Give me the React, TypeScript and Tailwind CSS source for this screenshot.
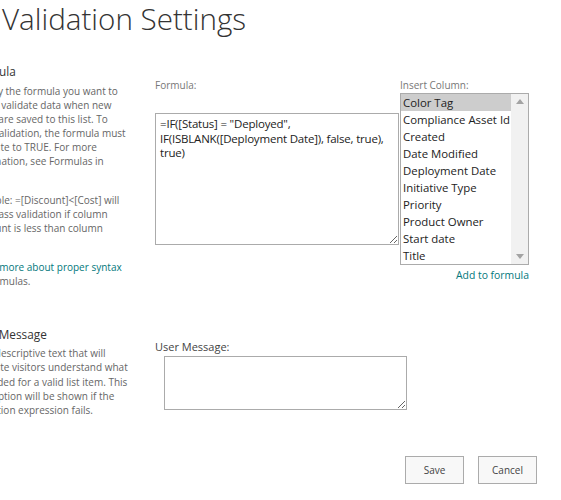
import React from "react";

// ─── Data ─────────────────────────────────────────────────────────────────────

const columns = [
  "Color Tag",
  "Compliance Asset Id",
  "Created",
  "Date Modified",
  "Deployment Date",
  "Initiative Type",
  "Priority",
  "Product Owner",
  "Start date",
  "Title",
];

const formula =
  '=IF([Status] = "Deployed", IF(ISBLANK([Deployment Date]), false, true), true)';

// ─── Sub-components ───────────────────────────────────────────────────────────

function Lines({ lines }: { lines: string[] }) {
  return (
    <p className="mb-[11px] whitespace-nowrap text-[10px] leading-[14px] text-[#666]">
      {lines.map((l, i) => (
        <span key={i} className="block h-[14px]">
          {l}
        </span>
      ))}
    </p>
  );
}

function ColumnList() {
  return (
    <div className="flex h-[172px] w-[129px] border border-[#ababab] bg-white">
      <ul className="flex-1 overflow-hidden">
        {columns.map((c, i) => (
          <li
            key={c}
            className={`h-[17px] whitespace-nowrap pl-[2px] text-[11.4px] leading-[17px] text-[#222] ${
              i === 0 ? "bg-[#cdcdcd]" : ""
            }`}
          >
            {c}
          </li>
        ))}
      </ul>
      <div className="flex w-[17px] flex-col items-center justify-between bg-[#f1f1f1] py-[5px]">
        <svg width="8" height="5" viewBox="0 0 8 5">
          <path d="M0 5 L4 0 L8 5 Z" fill="#a3a3a3" />
        </svg>
        <svg width="8" height="5" viewBox="0 0 8 5">
          <path d="M0 0 L4 5 L8 0 Z" fill="#a3a3a3" />
        </svg>
      </div>
    </div>
  );
}

function Button({ label }: { label: string }) {
  return (
    <button className="h-[28px] w-[59px] border border-[#ababab] bg-[#f8f8f8] text-[10px] text-[#444]">
      {label}
    </button>
  );
}

// ─── Page ─────────────────────────────────────────────────────────────────────

export default function App() {
  return (
    <div className="h-[500px] w-[561px] overflow-hidden bg-white font-['Open_Sans',sans-serif]">
      <h1 className="pl-[2px] text-[29.6px] font-light leading-[38px] text-[#333]">
        Validation Settings
      </h1>

      <div className="-ml-[30px]">
        {/* Formula */}
        <div className="mt-[24px] flex">
          <div className="w-[185px] shrink-0">
            <h2 className="mb-[4px] whitespace-nowrap text-[11.8px] leading-[18px] text-[#333]">
              Formula
            </h2>
            <Lines
              lines={[
                "Specify the formula you want to",
                "use to validate data when new",
                "items are saved to this list. To",
                "pass validation, the formula must",
                "evaluate to TRUE. For more",
                "information, see Formulas in",
                "Help.",
              ]}
            />
            <Lines
              lines={[
                "Example: =[Discount]<[Cost] will",
                "only pass validation if column",
                "Discount is less than column",
                "Cost.",
              ]}
            />
            <p className="whitespace-nowrap text-[10px] leading-[14px] text-[#666]">
              <span className="block">
                <a className="text-[#03787c]">Learn more about proper syntax</a>
              </span>
              <span className="block">for formulas.</span>
            </p>
          </div>

          <div className="flex pt-[16px]">
            <div className="w-[245px]">
              <label className="block text-[10px] leading-[14px] text-[#777]">
                Formula:
              </label>
              <textarea
                defaultValue={formula}
                className="mt-[21px] block h-[132px] w-[244px] border border-[#ababab] px-[4px] pt-[3px] text-[11.5px] leading-[14.5px] tracking-[-0.2px] text-[#222] outline-none"
              />
            </div>
            <div>
              <label className="block text-[10px] leading-[14px] text-[#777]">
                Insert Column:
              </label>
              <div className="mt-[1px]">
                <ColumnList />
              </div>
              <a className="mt-[3px] block text-right text-[10.4px] leading-[14px] text-[#03787c]">
                Add to formula
              </a>
            </div>
          </div>
        </div>

        {/* User message */}
        <div className="mt-[37px] flex">
          <div className="w-[185px] shrink-0">
            <h2 className="mb-[3px] whitespace-nowrap text-[11.8px] leading-[18px] text-[#333]">
              User Message
            </h2>
            <p className="whitespace-nowrap text-[10px] leading-[14.3px] text-[#666]">
              <span className="block">Type descriptive text that will</span>
              <span className="block">help site visitors understand what</span>
              <span className="block">is needed for a valid list item. This</span>
              <span className="block">description will be shown if the</span>
              <span className="block">validation expression fails.</span>
            </p>
          </div>
          <div className="pt-[14px]">
            <label className="block text-[11px] leading-[16px] text-[#444]">
              User Message:
            </label>
            <textarea className="ml-[9px] mt-[1px] block h-[54px] w-[243px] border border-[#ababab] outline-none" />
          </div>
        </div>
      </div>

      <div className="mt-[39px] flex justify-end gap-[14px] pr-[24px]">
        <Button label="Save" />
        <Button label="Cancel" />
      </div>
    </div>
  );
}
